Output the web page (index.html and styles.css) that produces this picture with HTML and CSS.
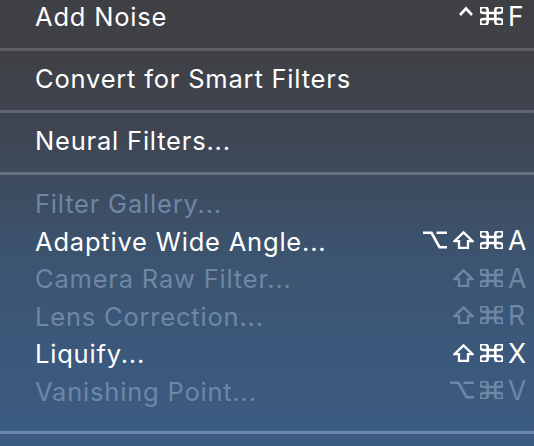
FILE: index.html
```html
<!DOCTYPE html>
<html>
<head>
<meta charset="utf-8">
<link rel="stylesheet" href="styles.css">
</head>
<body>
<div class="menu">
  <div class="group">
    <div class="item">
      <span class="label">Add Noise</span>
      <span class="keys">
        <span class="mods">
          <svg class="ic ctrl" viewBox="0 0 16 17" width="16" height="17"><path d="M2 10 L8 3.5 L14 10"/></svg>
          <svg class="ic cmd" viewBox="3 3 18 18" width="23" height="18" preserveAspectRatio="none"><path vector-effect="non-scaling-stroke" d="M15 6v12a3 3 0 1 0 3-3H6a3 3 0 1 0 3 3V6a3 3 0 1 0-3 3h12a3 3 0 1 0-3-3"/></svg>
        </span>
        <span class="letter">F</span>
      </span>
    </div>
  </div>
  <div class="sep s1"></div>
  <div class="group">
    <div class="item"><span class="label">Convert for Smart Filters</span></div>
  </div>
  <div class="sep s2"></div>
  <div class="group">
    <div class="item"><span class="label">Neural Filters...</span></div>
  </div>
  <div class="sep s3"></div>
  <div class="group last">
    <div class="item off"><span class="label">Filter Gallery...</span></div>
    <div class="item">
      <span class="label">Adaptive Wide Angle...</span>
      <span class="keys">
        <span class="mods">
          <svg class="ic opt" viewBox="0 0 24 18" width="24" height="18"><path d="M0 1.8 H8.5 L16.5 16.2 H24 M13.5 1.8 H24"/></svg>
          <svg class="ic shift" viewBox="0 0 21 18" width="21" height="18"><path d="M10.5 1.4 L19.6 10.2 H15 V16.8 H6 V10.2 H1.4 Z"/></svg>
          <svg class="ic cmd" viewBox="3 3 18 18" width="23" height="18" preserveAspectRatio="none"><path vector-effect="non-scaling-stroke" d="M15 6v12a3 3 0 1 0 3-3H6a3 3 0 1 0 3 3V6a3 3 0 1 0-3 3h12a3 3 0 1 0-3-3"/></svg>
        </span>
        <span class="letter">A</span>
      </span>
    </div>
    <div class="item off">
      <span class="label">Camera Raw Filter...</span>
      <span class="keys">
        <span class="mods">
          <svg class="ic shift" viewBox="0 0 21 18" width="21" height="18"><path d="M10.5 1.4 L19.6 10.2 H15 V16.8 H6 V10.2 H1.4 Z"/></svg>
          <svg class="ic cmd" viewBox="3 3 18 18" width="23" height="18" preserveAspectRatio="none"><path vector-effect="non-scaling-stroke" d="M15 6v12a3 3 0 1 0 3-3H6a3 3 0 1 0 3 3V6a3 3 0 1 0-3 3h12a3 3 0 1 0-3-3"/></svg>
        </span>
        <span class="letter">A</span>
      </span>
    </div>
    <div class="item off">
      <span class="label">Lens Correction...</span>
      <span class="keys">
        <span class="mods">
          <svg class="ic shift" viewBox="0 0 21 18" width="21" height="18"><path d="M10.5 1.4 L19.6 10.2 H15 V16.8 H6 V10.2 H1.4 Z"/></svg>
          <svg class="ic cmd" viewBox="3 3 18 18" width="23" height="18" preserveAspectRatio="none"><path vector-effect="non-scaling-stroke" d="M15 6v12a3 3 0 1 0 3-3H6a3 3 0 1 0 3 3V6a3 3 0 1 0-3 3h12a3 3 0 1 0-3-3"/></svg>
        </span>
        <span class="letter">R</span>
      </span>
    </div>
    <div class="item">
      <span class="label">Liquify...</span>
      <span class="keys">
        <span class="mods">
          <svg class="ic shift" viewBox="0 0 21 18" width="21" height="18"><path d="M10.5 1.4 L19.6 10.2 H15 V16.8 H6 V10.2 H1.4 Z"/></svg>
          <svg class="ic cmd" viewBox="3 3 18 18" width="23" height="18" preserveAspectRatio="none"><path vector-effect="non-scaling-stroke" d="M15 6v12a3 3 0 1 0 3-3H6a3 3 0 1 0 3 3V6a3 3 0 1 0-3 3h12a3 3 0 1 0-3-3"/></svg>
        </span>
        <span class="letter">X</span>
      </span>
    </div>
    <div class="item off">
      <span class="label">Vanishing Point...</span>
      <span class="keys">
        <span class="mods">
          <svg class="ic opt" viewBox="0 0 24 18" width="24" height="18"><path d="M0 1.8 H8.5 L16.5 16.2 H24 M13.5 1.8 H24"/></svg>
          <svg class="ic cmd" viewBox="3 3 18 18" width="23" height="18" preserveAspectRatio="none"><path vector-effect="non-scaling-stroke" d="M15 6v12a3 3 0 1 0 3-3H6a3 3 0 1 0 3 3V6a3 3 0 1 0-3 3h12a3 3 0 1 0-3-3"/></svg>
        </span>
        <span class="letter">V</span>
      </span>
    </div>
  </div>
  <div class="sep bottom"></div>
</div>
</body>
</html>
```
FILE: styles.css
```css
html, body {
  margin: 0;
  padding: 0;
  width: 534px;
  height: 446px;
  overflow: hidden;
}
body {
  background: linear-gradient(to bottom, #3f4044 0px, #3f4146 60px, #3e4552 130px, #3d4b5e 180px, #3c5470 260px, #3b597c 360px, #3c5b81 446px);
  font-family: Inter, "Noto Sans", sans-serif;
  color: #ffffff;
}
.menu {
  display: flex;
  flex-direction: column;
  margin-top: -2px;
}
.item {
  height: 37.5px;
  display: flex;
  align-items: center;
  justify-content: space-between;
  padding: 0 5px 0 35px;
  font-size: 25.5px;
  font-weight: 400;
  letter-spacing: 0.8px;
}
.item.off {
  color: #6d87a5;
}
.group.last {
  padding-bottom: 8px;
}
.group.last .item:first-child {
  margin-top: 1px;
}
.sep {
  height: 3px;
  margin: 12.75px 0 8.75px;
  background: #5e6065;
}
.sep.s2 { background: #5d6370; }
.sep.s3 { background: #66707f; }
.sep.bottom {
  background: #6b88ad;
  margin-bottom: 0;
}
.keys {
  display: flex;
  align-items: center;
  margin-top: -2px;
}
.mods {
  display: flex;
  align-items: center;
  gap: 6px;
}
.ic {
  display: block;
  fill: none;
  stroke: currentColor;
  stroke-width: 2.6;
  stroke-linejoin: miter;
}
.ic.shift {
  stroke-width: 2.3;
}
.ic.cmd {
  stroke-width: 2.6;
}
.ic.ctrl {
  stroke-width: 2.6;
  align-self: flex-start;
  margin-top: -2px;
}
.letter {
  width: 21px;
  margin-left: 5px;
  text-align: left;
  letter-spacing: 0;
  font-size: 26.5px;
}
```
